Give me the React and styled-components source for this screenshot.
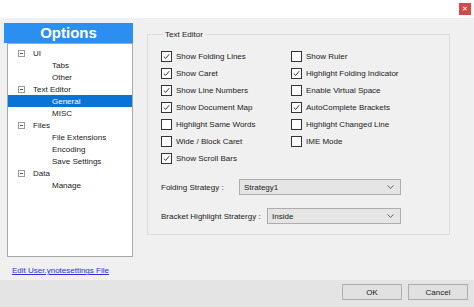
import React from "react";
import styled, { createGlobalStyle } from "styled-components";

const GlobalStyle = createGlobalStyle`
  html, body {
    margin: 0;
    padding: 0;
    background: #ffffff;
  }
  body {
    font-family: "Liberation Sans", Arial, sans-serif;
    font-size: 8px;
    color: #1a1a1a;
  }
`;

const Window = styled.div`
  width: 474px;
  height: 307px;
  display: flex;
  flex-direction: column;
  overflow: hidden;
`;

const TitleBar = styled.div`
  height: 18px;
  background: #ffffff;
  display: flex;
  justify-content: flex-end;
  align-items: flex-start;
  padding: 3px 3px 0 0;
  box-sizing: border-box;
`;

const CloseButton = styled.div`
  width: 12px;
  height: 12px;
  background: #d44a4a;
  color: #fff;
  font-size: 7px;
  line-height: 12px;
  text-align: center;
`;

const Body = styled.div`
  flex: 1;
  display: flex;
  background: #f0f0f0;
`;

const LeftPane = styled.div`
  width: 134px;
  padding: 5px 0 0 4px;
  box-sizing: border-box;
  display: flex;
  flex-direction: column;
`;

const Header = styled.div`
  height: 20px;
  width: 129px;
  background: #2b8ff2;
  color: #fff;
  font-weight: bold;
  font-size: 15px;
  line-height: 20px;
  text-align: center;
`;

const Tree = styled.div`
  margin-left: 3px;
  width: 126px;
  height: 214px;
  box-sizing: border-box;
  background: #fff;
  border: 1px solid #a8a8a8;
  padding-top: 3px;
`;

const Node = styled.div`
  height: 12px;
  display: flex;
  align-items: center;
  padding-left: ${(p) => (p.$child ? 44 : 10)}px;
  background: ${(p) => (p.$selected ? "#0a74d6" : "transparent")};
  color: ${(p) => (p.$selected ? "#fff" : "#1a1a1a")};
`;

const Expander = styled.span`
  width: 5px;
  height: 5px;
  border: 1px solid #9a9a9a;
  margin-right: 8px;
  position: relative;
  &::after {
    content: "";
    position: absolute;
    left: 1px;
    right: 1px;
    top: 2px;
    height: 1px;
    background: #555;
  }
`;

const Link = styled.a`
  margin: 9px 0 0 8px;
  color: #2a33d8;
  text-decoration: underline;
`;

const RightPane = styled.div`
  flex: 1;
  padding: 12px 24px 0 13px;
`;

const GroupBox = styled.fieldset`
  margin: 0;
  height: 205px;
  box-sizing: border-box;
  border: 1px solid #dcdcdc;
  padding: 9px 0 0 13px;
`;

const Legend = styled.legend`
  padding: 0 2px;
  margin-left: 2px;
  color: #1a1a1a;
`;

const CheckGrid = styled.div`
  display: grid;
  grid-template-columns: 130px 150px;
  grid-auto-rows: 17px;
`;

const CheckRow = styled.label`
  display: flex;
  align-items: center;
  gap: 4px;
`;

const Box = styled.span`
  width: 9px;
  height: 9px;
  border: 1px solid #333;
  background: #fff;
  display: flex;
  align-items: center;
  justify-content: center;
`;

const FieldRow = styled.div`
  display: flex;
  align-items: center;
  margin-top: ${(p) => p.$gap}px;
`;

const FieldLabel = styled.span`
  width: ${(p) => p.$w}px;
`;

const Select = styled.div`
  width: ${(p) => p.$w}px;
  height: 16px;
  box-sizing: border-box;
  background: #e5e5e5;
  border: 1px solid #adadad;
  display: flex;
  align-items: center;
  justify-content: space-between;
  padding: 0 6px 0 4px;
`;

const Footer = styled.div`
  height: 27px;
  background: #e4e4e4;
  display: flex;
  justify-content: flex-end;
  align-items: center;
  gap: 6px;
  padding: 0 6px 3px 0;
  box-sizing: border-box;
`;

const Button = styled.button`
  width: 60px;
  height: 16px;
  background: #e1e1e1;
  border: 1px solid #adadad;
  font-family: inherit;
  font-size: 8px;
  color: #1a1a1a;
  padding: 0;
`;

const Check = ({ checked, children }) => (
  <CheckRow>
    <Box>
      {checked && (
        <svg width="7" height="7" viewBox="0 0 7 7">
          <path d="M0.8 3.6 L2.7 5.4 L6.2 1.2" fill="none" stroke="#333" strokeWidth="1" />
        </svg>
      )}
    </Box>
    {children}
  </CheckRow>
);

const Chevron = () => (
  <svg width="7" height="4" viewBox="0 0 7 4">
    <path d="M0.5 0.5 L3.5 3.3 L6.5 0.5" fill="none" stroke="#555" strokeWidth="0.9" />
  </svg>
);

const tree = [
  { label: "UI", parent: true },
  { label: "Tabs" },
  { label: "Other" },
  { label: "Text Editor", parent: true },
  { label: "General", selected: true },
  { label: "MISC" },
  { label: "Files", parent: true },
  { label: "File Extensions" },
  { label: "Encoding" },
  { label: "Save Settings" },
  { label: "Data", parent: true },
  { label: "Manage" },
];

const checks = [
  ["Show Folding Lines", true],
  ["Show Ruler", false],
  ["Show Caret", true],
  ["Highlight Folding Indicator", true],
  ["Show Line Numbers", true],
  ["Enable Virtual Space", false],
  ["Show Document Map", true],
  ["AutoComplete Brackets", true],
  ["Highlight Same Words", false],
  ["Highlight Changed Line", false],
  ["Wide / Block Caret", false],
  ["IME Mode", false],
  ["Show Scroll Bars", true],
];

export default function App() {
  return (
    <Window>
      <GlobalStyle />
      <TitleBar>
        <CloseButton>✕</CloseButton>
      </TitleBar>
      <Body>
        <LeftPane>
          <Header>Options</Header>
          <Tree>
            {tree.map((n) => (
              <Node key={n.label} $child={!n.parent} $selected={n.selected}>
                {n.parent && <Expander />}
                {n.label}
              </Node>
            ))}
          </Tree>
          <Link href="#">Edit User.ynotesettings File</Link>
        </LeftPane>
        <RightPane>
          <GroupBox>
            <Legend>Text Editor</Legend>
            <CheckGrid>
              {checks.map(([label, on]) => (
                <Check key={label} checked={on}>
                  {label}
                </Check>
              ))}
            </CheckGrid>
            <FieldRow $gap={12}>
              <FieldLabel $w={78}>Folding Strategy :</FieldLabel>
              <Select $w={162}>
                Strategy1
                <Chevron />
              </Select>
            </FieldRow>
            <FieldRow $gap={13}>
              <FieldLabel $w={106}>Bracket Highlight Stratergy :</FieldLabel>
              <Select $w={134}>
                Inside
                <Chevron />
              </Select>
            </FieldRow>
          </GroupBox>
        </RightPane>
      </Body>
      <Footer>
        <Button>OK</Button>
        <Button>Cancel</Button>
      </Footer>
    </Window>
  );
}
